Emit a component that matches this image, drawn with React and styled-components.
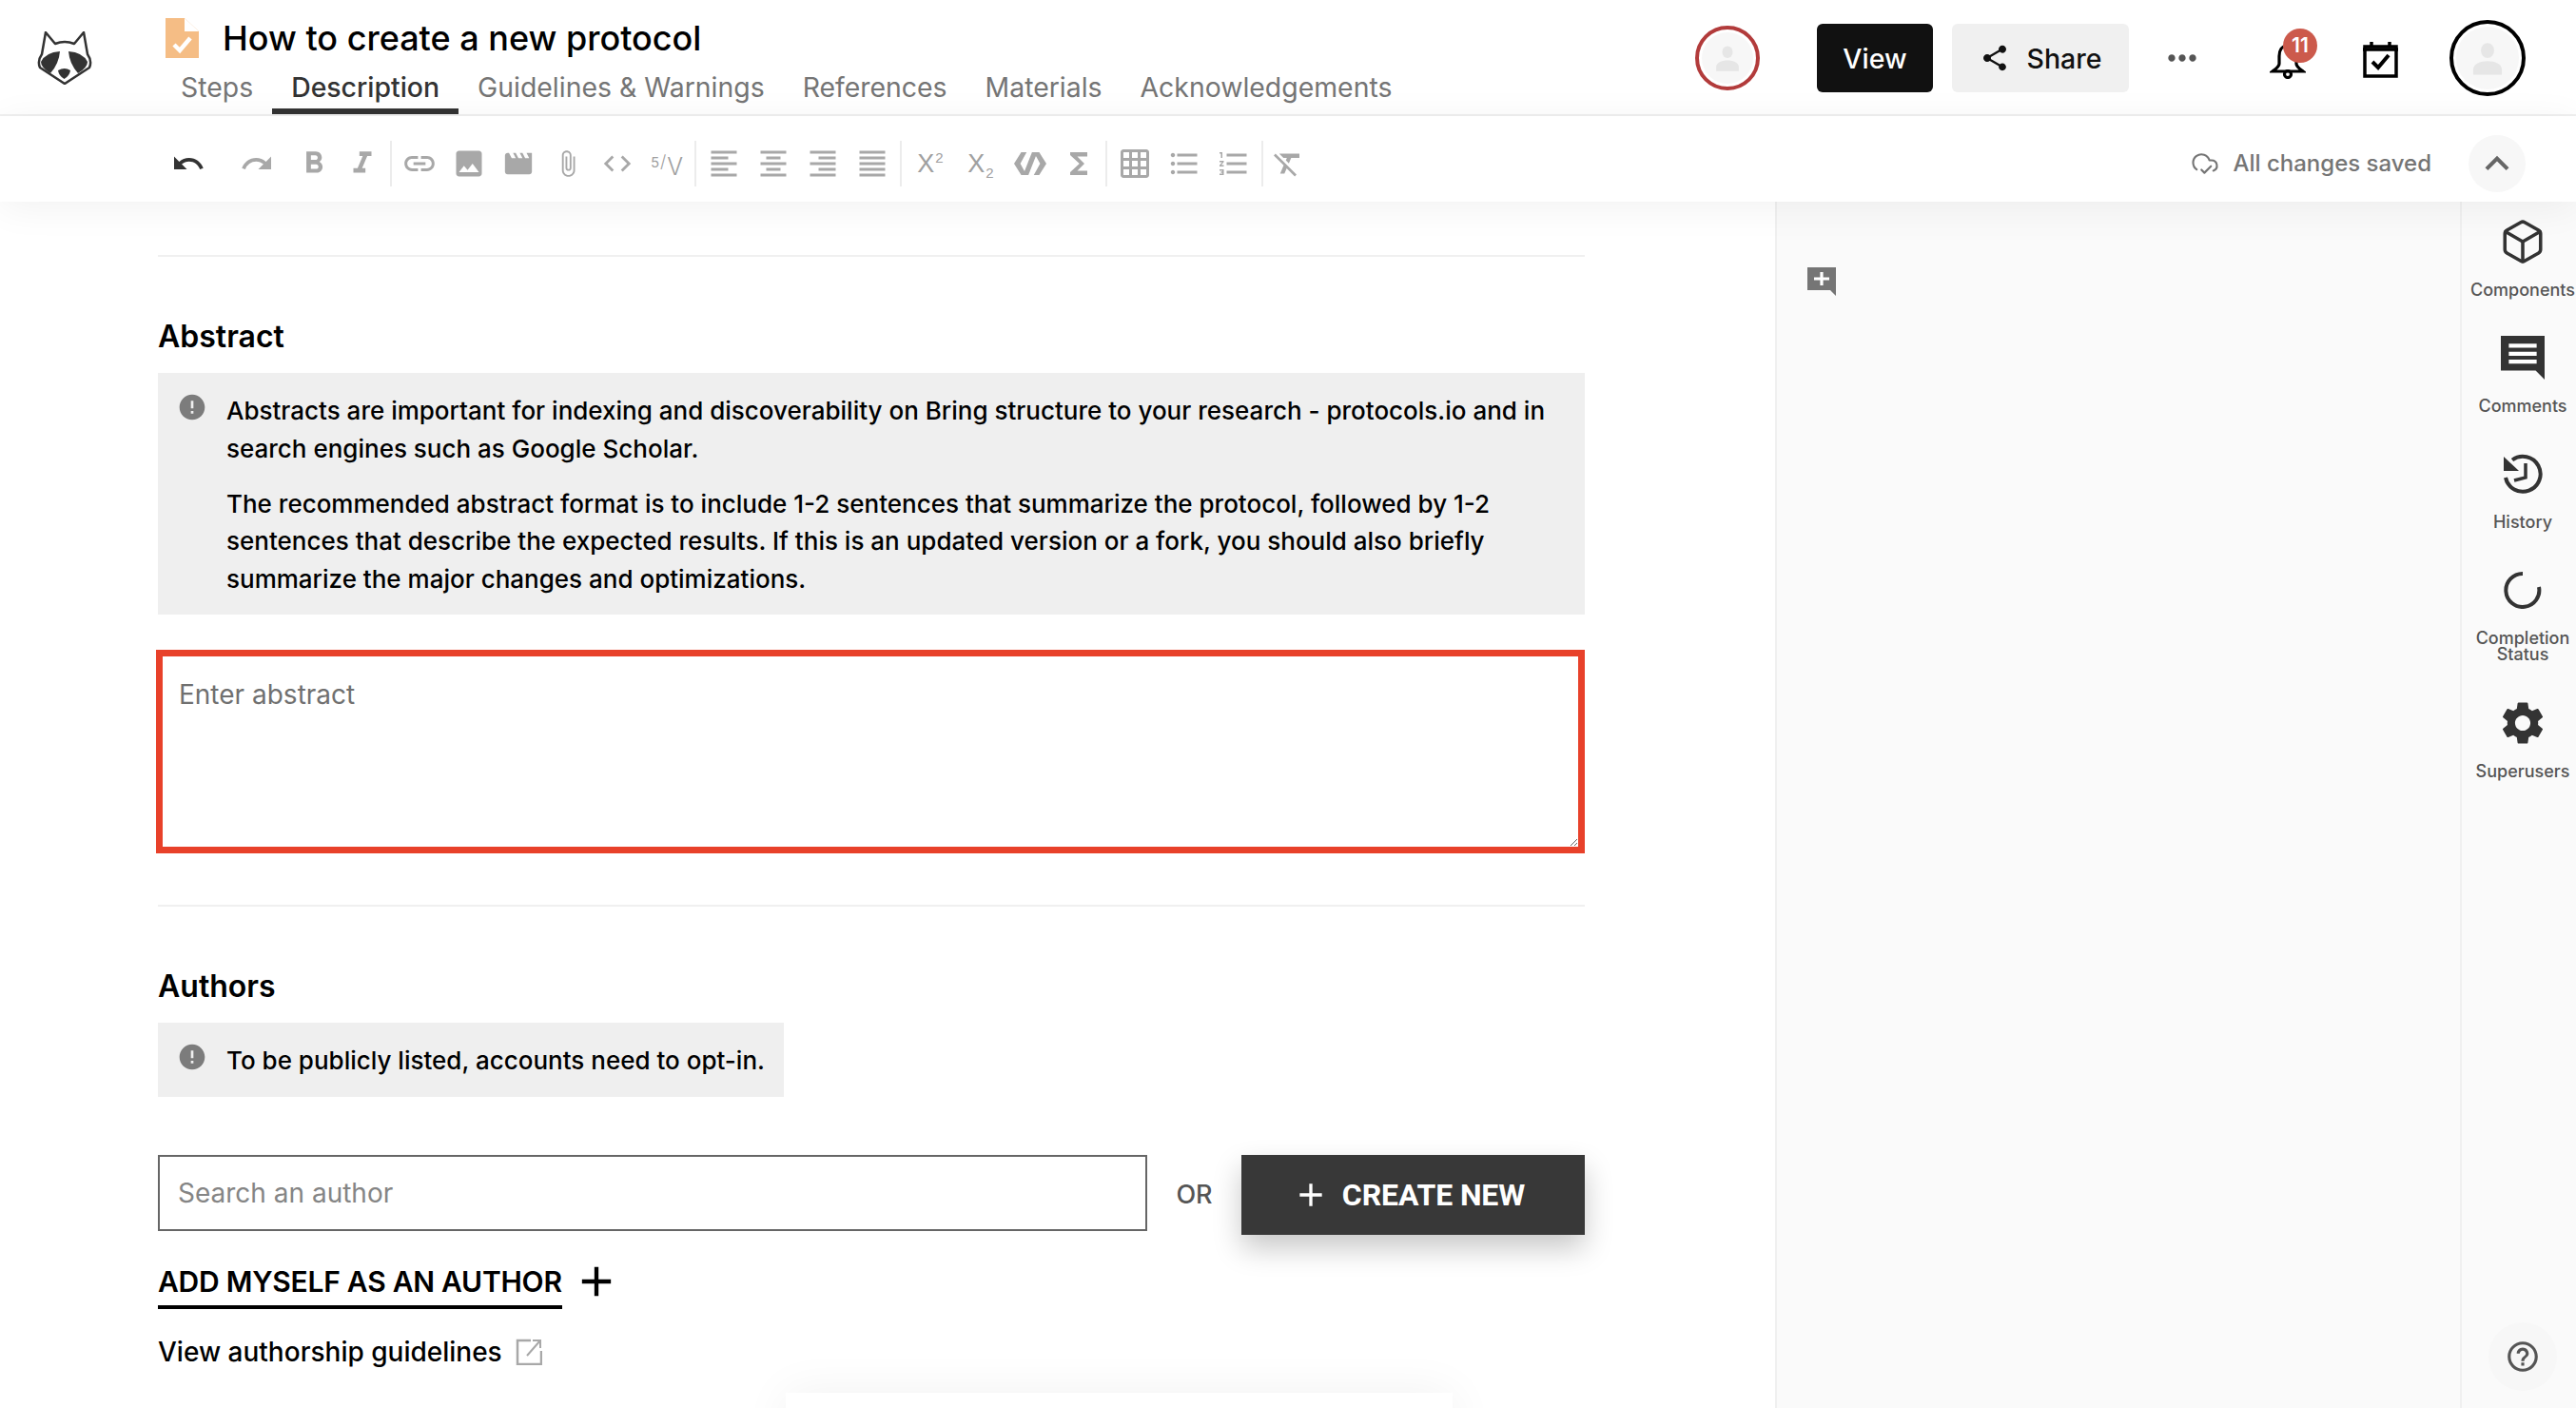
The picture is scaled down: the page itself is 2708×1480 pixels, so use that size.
import React from "react";
import styled, { createGlobalStyle } from "styled-components";
import {
  MdUndo,
  MdRedo,
  MdFormatBold,
  MdFormatItalic,
  MdLink,
  MdImage,
  MdMovie,
  MdAttachFile,
  MdCode,
  MdFormatAlignLeft,
  MdFormatAlignCenter,
  MdFormatAlignRight,
  MdFormatAlignJustify,
  MdFunctions,
  MdGridOn,
  MdFormatListBulleted,
  MdFormatListNumbered,
  MdFormatClear,
  MdShare,
  MdMoreHoriz,
  MdExpandLess,
  MdHelpOutline,
  MdError,
  MdAdd,
  MdSettings,
} from "react-icons/md";
import { CloudCheck, Box } from "lucide-react";

const GlobalStyle = createGlobalStyle`
  html, body {
    margin: 0;
    padding: 0;
    background: #fff;
  }
  * {
    box-sizing: border-box;
  }
  body {
    font-family: Inter, "Liberation Sans", sans-serif;
    color: #000;
  }
`;

const Page = styled.div`
  width: 2708px;
  height: 1480px;
  overflow: hidden;
  display: flex;
  flex-direction: column;
`;

const Header = styled.header`
  height: 122px;
  flex: none;
  display: flex;
  align-items: stretch;
  border-bottom: 2px solid #f0f0f0;
  background: #fff;
`;

const LogoSlot = styled.div`
  width: 170px;
  flex: none;
  padding: 33px 0 0 38px;
`;

const TitleBlock = styled.div`
  flex: 1;
  display: flex;
  flex-direction: column;
  padding-top: 18px;
`;

const TitleRow = styled.div`
  display: flex;
  align-items: center;
  gap: 25px;
  height: 44px;
  padding-left: 4px;
`;

const Title = styled.h1`
  margin: 0;
  font-size: 36px;
  font-weight: 500;
  line-height: 44px;
  color: #000;
`;

const Tabs = styled.nav`
  display: flex;
  margin-top: 14px;
`;

const Tab = styled.div`
  height: 44px;
  padding: 1px 20px 0;
  font-size: 28.4px;
  line-height: 30px;
  color: ${(p) => (p.$active ? "#333" : "#757575")};
  font-weight: ${(p) => (p.$active ? 500 : 400)};
  border-bottom: 6px solid ${(p) => (p.$active ? "#333" : "transparent")};
`;

const HeaderActions = styled.div`
  flex: none;
  display: flex;
  align-items: center;
  padding: 2px 53px 0 0;
`;

const AvatarRing = styled.div`
  width: ${(p) => p.$size}px;
  height: ${(p) => p.$size}px;
  border-radius: 50%;
  border: 4px solid ${(p) => p.$ring};
  padding: 3px;
  flex: none;
  margin-left: ${(p) => p.$left || 0}px;
`;

const AvatarFace = styled.div`
  width: 100%;
  height: 100%;
  border-radius: 50%;
  background: #f7f7f7;
  display: flex;
  align-items: center;
  justify-content: center;
`;

const Button = styled.button`
  height: 72px;
  border: none;
  border-radius: 6px;
  font-family: inherit;
  font-size: 28.5px;
  font-weight: 500;
  display: flex;
  align-items: center;
  justify-content: center;
  gap: 18px;
  flex: none;
  background: ${(p) => (p.$dark ? "#111" : "#f0f0f0")};
  color: ${(p) => (p.$dark ? "#fff" : "#111")};
  width: ${(p) => p.$width}px;
  margin-left: ${(p) => p.$left}px;
`;

const MoreDots = styled.div`
  width: 44px;
  margin-left: 34px;
  display: flex;
  justify-content: center;
  color: #555;
`;

const BellWrap = styled.div`
  position: relative;
  width: 38px;
  height: 38px;
  margin-left: 70px;
  margin-top: 6px;
`;

const Badge = styled.span`
  position: absolute;
  top: -15px;
  left: 14px;
  width: 36px;
  height: 36px;
  border-radius: 50%;
  background: #cc5a4c;
  color: #fff;
  font-size: 21px;
  font-weight: 600;
  line-height: 36px;
  text-align: center;
`;

const CalendarSlot = styled.div`
  margin-left: 60px;
  margin-top: 3px;
  display: flex;
`;

const Toolbar = styled.div`
  height: 90px;
  flex: none;
  display: flex;
  align-items: center;
  padding: 10px 53px 0 172px;
  background: #fff;
  position: relative;
  z-index: 2;
  box-shadow: 0 6px 40px rgba(0, 0, 0, 0.06);
`;

const ToolButton = styled.div`
  width: ${(p) => p.$width || 52}px;
  height: 52px;
  flex: none;
  display: flex;
  align-items: center;
  justify-content: center;
  color: ${(p) => (p.$on ? "#333" : "#a8a8a8")};
  margin-right: ${(p) => p.$after || 0}px;
`;

const ToolDivider = styled.span`
  width: 2px;
  height: 48px;
  background: #ececec;
  margin: 0 3px;
  flex: none;
`;

const Fraction = styled.span`
  color: #a0a0a0;
  font-weight: 400;
  white-space: nowrap;
  font-size: 15px;
  line-height: 30px;
  position: relative;
  top: -3px;

  b {
    font-weight: 300;
    font-size: 18px;
    margin: 0 1px;
  }
  i {
    font-style: normal;
    font-weight: 300;
    font-size: 25px;
    position: relative;
    top: 8px;
  }
`;

const ScriptGlyph = styled.span`
  font-family: "Liberation Sans", sans-serif;
  font-size: 27px;
  line-height: 30px;
  color: #a0a0a0;
  white-space: nowrap;

  sup,
  sub {
    font-size: 15px;
    line-height: 0;
    margin-left: 1px;
  }
`;

const SaveState = styled.div`
  margin: -2px 0 0 auto;
  display: flex;
  align-items: center;
  gap: 14px;
  font-size: 24px;
  font-weight: 500;
  color: #757575;
`;

const RoundIcon = styled.div`
  width: ${(p) => p.$size}px;
  height: ${(p) => p.$size}px;
  border-radius: 50%;
  background: #f7f7f7;
  color: ${(p) => p.$color};
  display: flex;
  align-items: center;
  justify-content: center;
  flex: none;
`;

const CollapseSlot = styled.div`
  margin-left: 39px;
`;

const Body = styled.div`
  flex: 1;
  min-height: 0;
  display: flex;
  position: relative;
`;

const EditorColumn = styled.main`
  width: 1866px;
  flex: none;
  padding: 56px 0 0 166px;
  position: relative;
  background: #fff;
`;

const EditorInner = styled.div`
  width: 1500px;
`;

const Divider = styled.hr`
  border: none;
  height: 2px;
  margin: ${(p) => p.$top || 0}px 0 0;
  background: #f0f0f0;
`;

const SectionTitle = styled.h2`
  margin: ${(p) => p.$top}px 0 0;
  font-size: 32px;
  line-height: 40px;
  font-weight: 600;
  color: #000;
`;

const Notice = styled.div`
  margin-top: 18px;
  display: ${(p) => (p.$inline ? "inline-flex" : "flex")};
  gap: 23px;
  padding: 20px ${(p) => (p.$inline ? 20 : 36)}px 18px 23px;
  background: #efefef;
  font-size: 26px;
  font-weight: 500;
  line-height: 39.5px;
  color: #000;
  vertical-align: top;

  p {
    margin: 0;
  }
  p + p {
    margin-top: 18.5px;
  }
`;

const NoticeIcon = styled.div`
  flex: none;
  width: 26px;
  height: 26px;
  margin-top: 3px;
  color: #7c7c7c;
  display: flex;
  align-items: center;
  justify-content: center;

  svg {
    flex: none;
  }
`;

const AbstractInput = styled.textarea`
  display: block;
  width: 1502px;
  height: 214px;
  margin: 37px 0 0 -2px;
  padding: 22px 17px;
  border: 7px solid #e8412a;
  outline: none;
  font-family: inherit;
  font-size: 28px;
  line-height: 36px;
  color: #333;

  &::placeholder {
    color: #707070;
  }
`;

const SearchRow = styled.div`
  margin-top: 61px;
  display: flex;
  align-items: flex-start;
`;

const SearchInput = styled.input`
  width: 1040px;
  height: 80px;
  flex: none;
  padding: 0 19px;
  border: 2px solid #666;
  outline: none;
  font-family: inherit;
  font-size: 28px;
  color: #333;

  &::placeholder {
    color: #858585;
  }
`;

const OrLabel = styled.span`
  width: 99px;
  flex: none;
  text-align: center;
  font-size: 27px;
  font-weight: 500;
  line-height: 84px;
  color: #555;
`;

const CreateButton = styled.button`
  width: 361px;
  height: 84px;
  flex: none;
  border: none;
  background: #383838;
  color: #fff;
  display: flex;
  align-items: center;
  justify-content: center;
  gap: 13px;
  padding: 0 10px 0 0;
  font-family: Roboto, Inter, sans-serif;
  font-size: 32px;
  font-weight: 700;
  letter-spacing: -0.1px;
  box-shadow: 0 14px 30px rgba(0, 0, 0, 0.22);
`;

const AddAuthorRow = styled.div`
  margin-top: 24px;
  display: flex;
  align-items: flex-start;
  gap: 10px;
`;

const AddAuthorLink = styled.span`
  font-size: 30px;
  line-height: 50px;
  font-weight: 600;
  color: #000;
  letter-spacing: -0.25px;
  border-bottom: 4px solid #000;
`;

const PlusSlot = styled.span`
  display: flex;
  margin-top: -1px;
`;

const GuideRow = styled.div`
  margin-top: 25px;
  display: flex;
  align-items: center;
  gap: 14px;
  font-size: 28px;
  font-weight: 500;
  line-height: 40px;
  color: #000;
`;

const BottomCard = styled.div`
  position: absolute;
  left: 826px;
  top: 1252px;
  width: 701px;
  height: 80px;
  background: #fff;
  box-shadow: 0 0 50px rgba(0, 0, 0, 0.06);
`;

const CommentColumn = styled.div`
  flex: 1;
  background: #fafafa;
  border-left: 2px solid #f0f0f0;
  padding: 69px 0 0 32px;
`;

const SideRail = styled.aside`
  width: 122px;
  flex: none;
  background: #fafafa;
  border-left: 2px solid #f0f0f0;
  display: flex;
  flex-direction: column;
  align-items: center;
  padding: 20px 0 0 8px;
`;

const RailItem = styled.div`
  width: 100%;
  display: flex;
  flex-direction: column;
  align-items: center;
  height: ${(p) => p.$height || 122}px;
  color: #333;
`;

const RailIcon = styled.div`
  height: 44px;
  display: flex;
  align-items: center;
  justify-content: center;
`;

const RailLabel = styled.span`
  margin-top: 20px;
  font-size: 18px;
  line-height: 17px;
  font-weight: 500;
  color: #555;
  text-align: center;
  white-space: nowrap;
`;

const HelpSlot = styled.div`
  margin-top: auto;
  margin-bottom: 18px;
`;

const Logo = () => (
  <svg width="60" height="56" viewBox="0 0 60 56" fill="none">
    <path
      d="M10 1 L20 13 Q30 9 40 13 L50 1 L54 24 Q59 31 56 38 L30 55 L4 38 Q1 31 6 24 Z"
      stroke="#333"
      strokeWidth="2.5"
      strokeLinejoin="round"
      fill="#fff"
    />
    <path d="M25 21 Q10 22 5 32 Q5 38 15 44 Q24 34 25 21 Z" fill="#333" />
    <path d="M34 21 Q49 22 54 32 Q54 38 44 44 Q35 34 34 21 Z" fill="#333" />
    <path d="M23 41 Q30 37 36 41 Q35 47 29.500 50 Q24 47 23 41 Z" fill="#333" />
  </svg>
);

const FileIcon = () => (
  <svg width="35" height="42" viewBox="0 0 35 42">
    <path d="M0 0H20L35 14V42H0Z" fill="#f5bd85" />
    <path d="M20 0L35 14H20Z" fill="#fff" />
    <path d="M9 28l6 6 11-13" stroke="#fff" strokeWidth="4.500" fill="none" />
  </svg>
);

const Person = ({ size }) => (
  <svg width={size} height={size} viewBox="0 0 24 24" fill="#e6e6e6">
    <ellipse cx="12" cy="7" rx="4.400" ry="5" />
    <path d="M2.500 23v-3.500C2.500 16 7 14 12 14s9.500 2 9.500 5.500V23Z" />
  </svg>
);

const Bell = () => (
  <svg width="38" height="38" viewBox="0 0 38 38" fill="none" stroke="#000" strokeWidth="3.200">
    <path d="M19 3c-7 0-9 6-9 11v8c0 3-3 5-7 8h32c-4-3-7-5-7-8v-8c0-5-2-11-9-11Z" />
    <circle cx="19" cy="33" r="3.500" />
  </svg>
);

const Calendar = () => (
  <svg width="37" height="38" viewBox="0 0 37 38" fill="none">
    <path d="M2 5h33v31H2z" stroke="#000" strokeWidth="3.500" />
    <path d="M0 8h37M9 0v5M28 0v5" stroke="#000" strokeWidth="3.500" />
    <path d="M10 21l6 6 11-13" stroke="#000" strokeWidth="4" />
  </svg>
);

const CodeBlockIcon = () => (
  <svg width="34" height="24" viewBox="0 0 36 30" preserveAspectRatio="none" fill="#a8a8a8">
    <path d="M8 0h6L7 15l7 15H8L0 15Z" />
    <path d="M28 0h-6l7 15-7 15h6l8-15Z" />
    <path d="M20 0h6L16 30h-6Z" />
  </svg>
);

const CommentPlus = () => (
  <svg width="30" height="30" viewBox="0 0 30 30">
    <path d="M0 0h30v30l-6-6H0Z" fill="#757575" />
    <path d="M15 5v14M7 12h16" stroke="#fff" strokeWidth="3.200" />
  </svg>
);

const CommentsIcon = () => (
  <svg width="46" height="46" viewBox="0 0 44 44">
    <path d="M0 0h44v44l-9-9H0Z" fill="#333" />
    <path d="M8 10h28M8 18h28M8 26h28" stroke="#fff" strokeWidth="4" />
  </svg>
);

const HistoryIcon = () => (
  <svg width="42" height="42" viewBox="0 0 42 42" fill="none">
    <path d="M10 6.500A18.500 18.500 0 1 1 3 25" stroke="#333" strokeWidth="4" />
    <path d="M1 3v15h16Z" fill="#333" />
    <path d="M24 10v15l-12 3" stroke="#333" strokeWidth="3.500" />
  </svg>
);

const CompletionIcon = () => (
  <svg width="40" height="40" viewBox="0 0 40 40" fill="none">
    <path d="M20 3A17.500 17.500 0 1 0 37 17" stroke="#333" strokeWidth="4" />
  </svg>
);

const ExternalIcon = () => (
  <svg width="28" height="28" viewBox="0 0 28 28" fill="none" stroke="#a8a8a8" strokeWidth="2.500">
    <path d="M16 2H2v25h25V13" />
    <path d="M12 18L26 2M18 2h8v8" strokeWidth="2" />
  </svg>
);

const toolIcons = [
  { id: "undo", icon: <MdUndo size={36} />, after: 20, on: true },
  { id: "redo", icon: <MdRedo size={36} />, after: 8 },
  { id: "bold", icon: <MdFormatBold size={38} />, width: 51 },
  { id: "italic", icon: <MdFormatItalic size={38} /> },
  "d1",
  { id: "link", icon: <MdLink size={38} /> },
  { id: "image", icon: <MdImage size={36} /> },
  { id: "movie", icon: <MdMovie size={34} /> },
  { id: "clip", icon: <MdAttachFile size={30} /> },
  { id: "code", icon: <MdCode size={34} /> },
  {
    id: "frac",
    icon: (
      <Fraction>
        5<b>/</b>
        <i>V</i>
      </Fraction>
    ),
  },
  "d2",
  { id: "left", icon: <MdFormatAlignLeft size={36} /> },
  { id: "center", icon: <MdFormatAlignCenter size={36} /> },
  { id: "right", icon: <MdFormatAlignRight size={36} /> },
  { id: "justify", icon: <MdFormatAlignJustify size={36} /> },
  "d3",
  {
    id: "sup",
    width: 54,
    icon: (
      <ScriptGlyph>
        X<sup>2</sup>
      </ScriptGlyph>
    ),
  },
  {
    id: "sub",
    icon: (
      <ScriptGlyph>
        X<sub>2</sub>
      </ScriptGlyph>
    ),
  },
  { id: "block", icon: <CodeBlockIcon />, width: 51 },
  { id: "sigma", icon: <MdFunctions size={36} />, width: 51 },
  "d4",
  { id: "table", icon: <MdGridOn size={36} /> },
  { id: "ul", icon: <MdFormatListBulleted size={36} /> },
  { id: "ol", icon: <MdFormatListNumbered size={36} /> },
  "d5",
  { id: "clear", icon: <MdFormatClear size={36} />, width: 46 },
];

const railItems = [
  { label: "Components", icon: <Box size={50} strokeWidth={1.7} /> },
  { label: "Comments", icon: <CommentsIcon /> },
  { label: "History", icon: <HistoryIcon /> },
  { label: "Completion", second: "Status", icon: <CompletionIcon />, height: 140 },
  { label: "Superusers", icon: <MdSettings size={54} /> },
];

const tabs = ["Steps", "Description", "Guidelines & Warnings", "References", "Materials", "Acknowledgements"];

export default function App() {
  return (
    <Page>
      <GlobalStyle />
      <Header>
        <LogoSlot>
          <Logo />
        </LogoSlot>
        <TitleBlock>
          <TitleRow>
            <FileIcon />
            <Title>How to create a new protocol</Title>
          </TitleRow>
          <Tabs>
            {tabs.map((t) => (
              <Tab key={t} $active={t === "Description"}>
                {t}
              </Tab>
            ))}
          </Tabs>
        </TitleBlock>
        <HeaderActions>
          <AvatarRing $size={68} $ring="#b23b3b">
            <AvatarFace>
              <Person size={30} />
            </AvatarFace>
          </AvatarRing>
          <Button $dark $width={122} $left={60}>
            View
          </Button>
          <Button $width={186} $left={20}>
            <MdShare size={32} />
            Share
          </Button>
          <MoreDots>
            <MdMoreHoriz size={44} />
          </MoreDots>
          <BellWrap>
            <Bell />
            <Badge>11</Badge>
          </BellWrap>
          <CalendarSlot>
            <Calendar />
          </CalendarSlot>
          <AvatarRing $size={80} $ring="#000" $left={54}>
            <AvatarFace>
              <Person size={38} />
            </AvatarFace>
          </AvatarRing>
        </HeaderActions>
      </Header>
      <Toolbar>
        {toolIcons.map((item) =>
          typeof item === "string" ? (
            <ToolDivider key={item} />
          ) : (
            <ToolButton key={item.id} $width={item.width} $on={item.on} $after={item.after}>
              {item.icon}
            </ToolButton>
          )
        )}
        <SaveState>
          <CloudCheck size={30} strokeWidth={1.7} />
          All changes saved
        </SaveState>
        <CollapseSlot>
          <RoundIcon $size={60} $color="#666">
            <MdExpandLess size={50} />
          </RoundIcon>
        </CollapseSlot>
      </Toolbar>
      <Body>
        <EditorColumn>
          <EditorInner>
            <Divider />
            <SectionTitle $top={64}>Abstract</SectionTitle>
            <Notice>
              <NoticeIcon>
                <MdError size={32} />
              </NoticeIcon>
              <div>
                <p>
                  Abstracts are important for indexing and discoverability on Bring structure to your research -
                  protocols.io and in search engines such as Google Scholar.
                </p>
                <p>
                  The recommended abstract format is to include 1-2 sentences that summarize the protocol, followed by
                  1-2 sentences that describe the expected results. If this is an updated version or a fork, you should
                  also briefly summarize the major changes and optimizations.
                </p>
              </div>
            </Notice>
            <AbstractInput placeholder="Enter abstract" />
            <Divider $top={54} />
            <SectionTitle $top={64}>Authors</SectionTitle>
            <Notice $inline>
              <NoticeIcon>
                <MdError size={32} />
              </NoticeIcon>
              To be publicly listed, accounts need to opt-in.
            </Notice>
            <SearchRow>
              <SearchInput placeholder="Search an author" />
              <OrLabel>OR</OrLabel>
              <CreateButton>
                <MdAdd size={40} />
                CREATE NEW
              </CreateButton>
            </SearchRow>
            <AddAuthorRow>
              <AddAuthorLink>ADD MYSELF AS AN AUTHOR</AddAuthorLink>
              <PlusSlot>
                <MdAdd size={52} />
              </PlusSlot>
            </AddAuthorRow>
            <GuideRow>
              View authorship guidelines
              <ExternalIcon />
            </GuideRow>
          </EditorInner>
          <BottomCard />
        </EditorColumn>
        <CommentColumn>
          <CommentPlus />
        </CommentColumn>
        <SideRail>
          {railItems.map((item) => (
            <RailItem key={item.label} $height={item.height}>
              <RailIcon>{item.icon}</RailIcon>
              <RailLabel>
                {item.label}
                {item.second && <br />}
                {item.second}
              </RailLabel>
            </RailItem>
          ))}
          <HelpSlot>
            <RoundIcon $size={72} $color="#555">
              <MdHelpOutline size={38} />
            </RoundIcon>
          </HelpSlot>
        </SideRail>
      </Body>
    </Page>
  );
}
